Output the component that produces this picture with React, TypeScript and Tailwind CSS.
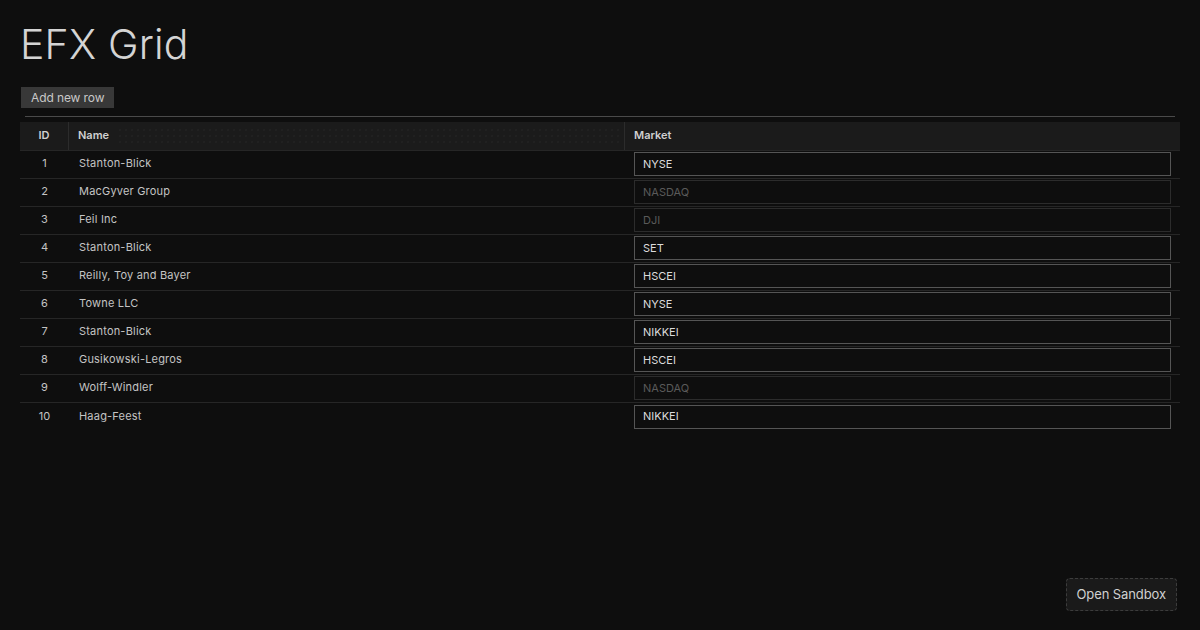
import React from 'react';

type Row = { id: number; name: string; market: string; active: boolean };

const rows: Row[] = [
  { id: 1, name: 'Stanton-Blick', market: 'NYSE', active: true },
  { id: 2, name: 'MacGyver Group', market: 'NASDAQ', active: false },
  { id: 3, name: 'Feil Inc', market: 'DJI', active: false },
  { id: 4, name: 'Stanton-Blick', market: 'SET', active: true },
  { id: 5, name: 'Reilly, Toy and Bayer', market: 'HSCEI', active: true },
  { id: 6, name: 'Towne LLC', market: 'NYSE', active: true },
  { id: 7, name: 'Stanton-Blick', market: 'NIKKEI', active: true },
  { id: 8, name: 'Gusikowski-Legros', market: 'HSCEI', active: true },
  { id: 9, name: 'Wolff-Windler', market: 'NASDAQ', active: false },
  { id: 10, name: 'Haag-Feest', market: 'NIKKEI', active: true },
];

export default function App() {
  return (
    <div className="min-h-[630px] w-[1200px] bg-[#0e0e0e] font-['Inter','Liberation_Sans',sans-serif] text-[#cfcfcf] relative">
      <div className="px-5 pt-[20px]">
        <h1 className="text-[41px] leading-[48px] font-light text-[#d4d4d4] tracking-[0.2px]">EFX Grid</h1>

        <button className="mt-[19px] ml-[1px] h-[21px] px-[10px] bg-[#383838] text-[12px] text-[#c8c8c8] leading-[21px] tracking-[-0.1px]">
          Add new row
        </button>

        <div className="mt-[8px] mx-[5px] h-px bg-[#4a4a4a]" />

        {/* Grid */}
        <div className="mt-[5px] w-[1160px] text-[11px]">
          <div className="flex h-[29px] bg-[#1b1b1b] border-b border-[#262626] font-semibold text-[#d0d0d0]">
            <div className="w-[49px] flex items-center justify-center border-r border-[#2c2c2c] pb-[1px]">ID</div>
            <div className="w-[556px] flex items-center pl-[9px] border-r border-[#2c2c2c] pb-[1px]">
              <span>Name</span>
              <div className="ml-2 flex-1 h-[18px] mr-1 bg-[radial-gradient(#262626_0.6px,transparent_0.8px)] bg-[length:6px_6px]" />
            </div>
            <div className="flex-1 flex items-center pl-[9px] pb-[1px]">Market</div>
          </div>

          {rows.map((r, i) => (
            <div
              key={r.id}
              className={
                i === rows.length - 1
                  ? 'flex h-[28px] text-[#c4c4c4]'
                  : 'flex h-[28px] border-b border-[#262626] text-[#c4c4c4]'
              }
            >
              <div className="w-[49px] flex items-center justify-center pb-[2px]">{r.id}</div>
              <div className="w-[556px] flex items-center pl-[10px] tracking-[0.2px] pb-[2px]">{r.name}</div>
              <div className="flex-1 flex items-center pl-[9px] pr-[9px] pb-[1px]">
                <div
                  className={
                    r.active
                      ? 'w-full h-[24px] border border-[#555555] flex items-center pl-[8px] text-[#dcdcdc]'
                      : 'w-full h-[24px] border border-[#2c2c2c] flex items-center pl-[8px] text-[#5a5a5a]'
                  }
                >
                  {r.market}
                </div>
              </div>
            </div>
          ))}
        </div>
      </div>

      <button className="absolute right-[23px] bottom-[19px] h-[33px] px-[10px] rounded-[4px] border border-dashed border-[#3c3c3c] bg-[#1a1a1a] text-[13px] text-[#d0d0d0] tracking-[-0.1px]">
        Open Sandbox
      </button>
    </div>
  );
}
